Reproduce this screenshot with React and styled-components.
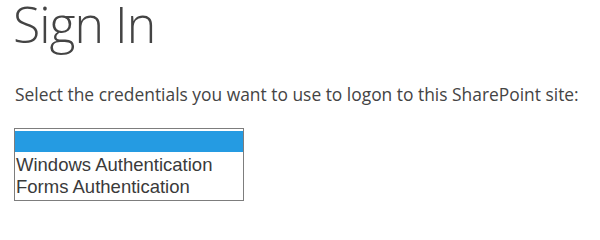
import React from "react";
import styled, { createGlobalStyle } from "styled-components";

const Global = createGlobalStyle`
  html, body { margin: 0; padding: 0; background: #fff; }
`;

const Page = styled.div`
  width: 600px;
  height: 207px;
  padding-left: 15px;
  box-sizing: border-box;
  display: flex;
  flex-direction: column;
  overflow: hidden;
`;

const Title = styled.h1`
  margin: 0 0 0 -2px;
  font-family: "Open Sans", "Segoe UI", sans-serif;
  font-weight: 300;
  font-size: 50px;
  line-height: 48px;
  color: #444;
  letter-spacing: -1px;
`;

const Prompt = styled.p`
  margin: 36px 0 0 0;
  font-family: "Open Sans", "Segoe UI", sans-serif;
  font-size: 17.4px;
  line-height: 20px;
  color: #444;
  white-space: nowrap;
`;

const ListBox = styled.div`
  margin: 24px 0 0 -1px;
  width: 230px;
  height: 73px;
  box-sizing: border-box;
  border: 1px solid #7d7d7d;
  padding-top: 2px;
  display: flex;
  flex-direction: column;
  background: #fff;
`;

const Option = styled.div`
  height: ${(p) => p.$h}px;
  line-height: ${(p) => p.$h + 3}px;
  padding-left: 1px;
  font-family: "Liberation Sans", Arial, sans-serif;
  font-size: 18.5px;
  color: #3a3a3a;
  background: ${(p) => (p.$selected ? "#259be2" : "transparent")};
  white-space: nowrap;
`;

export default function App() {
  return (
    <>
      <Global />
      <Page>
        <Title>Sign In</Title>
        <Prompt>Select the credentials you want to use to logon to this SharePoint site:</Prompt>
        <ListBox role="listbox">
          <Option $h={21} $selected aria-selected="true"></Option>
          <Option $h={22}>Windows Authentication</Option>
          <Option $h={22}>Forms Authentication</Option>
        </ListBox>
      </Page>
    </>
  );
}
